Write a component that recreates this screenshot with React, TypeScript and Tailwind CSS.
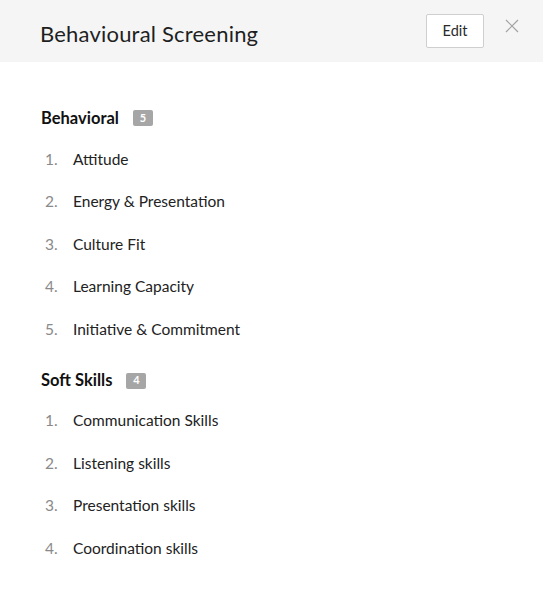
import React from 'react';

interface Section {
  title: string;
  items: string[];
}

const sections: Section[] = [
  {
    title: 'Behavioral',
    items: ['Attitude', 'Energy & Presentation', 'Culture Fit', 'Learning Capacity', 'Initiative & Commitment'],
  },
  {
    title: 'Soft Skills',
    items: ['Communication Skills', 'Listening skills', 'Presentation skills', 'Coordination skills'],
  },
];

const CloseIcon: React.FC = () => (
  <svg width="14" height="14" viewBox="0 0 14 14" fill="none">
    <path d="M1 1L13 13M13 1L1 13" stroke="#a3a3a3" strokeWidth="1.2" />
  </svg>
);

const App: React.FC = () => {
  return (
    <div className="w-[543px] h-[600px] bg-white font-['Lato','Liberation_Sans',sans-serif] text-[#1f1f1f]">
      {/* Header */}
      <header className="h-[62px] bg-[#f5f5f5] flex items-center pl-[40px] pr-[24px]">
        <h1 className="text-[22px] font-normal tracking-[0.2px] mt-[4px] flex-1">Behavioural Screening</h1>
        <button className="w-[58px] h-[34px] bg-white border border-[#cfcfcf] rounded-[2px] text-[14.5px] text-[#2a2a2a] mr-[21px]">
          Edit
        </button>
        <button className="w-[14px] h-[14px] -mt-[10px]">
          <CloseIcon />
        </button>
      </header>

      {/* Body */}
      <main className="pt-[44px] px-[41px]">
        {sections.map((section, si) => (
          <section key={section.title} className={si > 0 ? 'mt-[18px]' : ''}>
            <div className="h-[24px] flex items-center">
              <h2 className="text-[16.5px] font-bold text-[#111]">{section.title}</h2>
              <span className="ml-[14px] w-[20px] h-[16px] bg-[#a6a6a6] rounded-[2px] text-white text-[11px] font-bold flex items-center justify-center">
                {section.items.length}
              </span>
            </div>
            <ol className={si > 0 ? 'mt-[7px]' : 'mt-[8px]'}>
              {section.items.map((item, i) => (
                <li key={item} className="h-[42.5px] flex items-center pl-[4px] text-[15.5px]">
                  <span className="w-[28px] text-[#8a8a8a]">{i + 1}.</span>
                  <span className="text-[#222]">{item}</span>
                </li>
              ))}
            </ol>
          </section>
        ))}
      </main>
    </div>
  );
};

export default App;
